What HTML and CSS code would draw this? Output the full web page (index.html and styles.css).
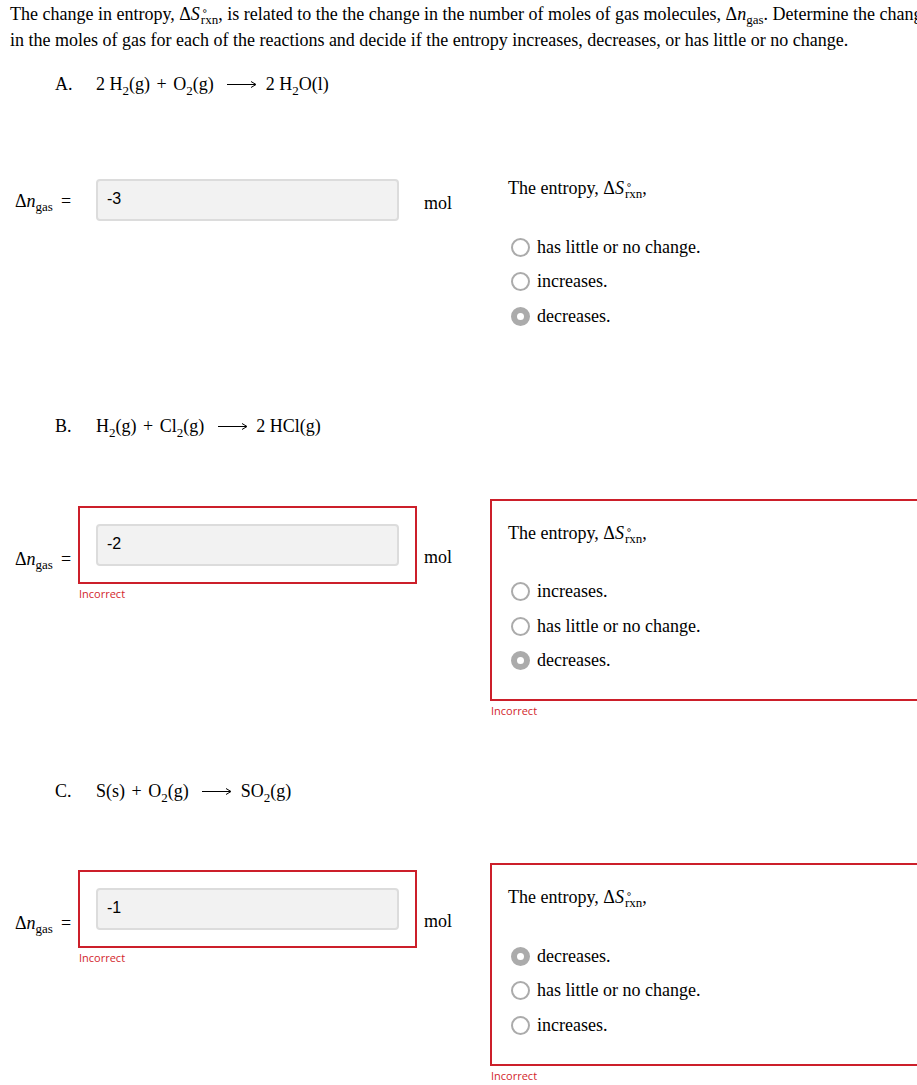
FILE: index.html
```html
<!DOCTYPE html>
<html lang="en">
<head>
<meta charset="utf-8">
<title>Entropy and moles of gas</title>
<link rel="stylesheet" href="styles.css">
</head>
<body>
<div class="page">
  <p class="intro">The change in entropy, <span class="m">Δ<i>S</i><span class="ss"><span class="sup">∘</span><span class="sub">rxn</span></span></span>, is related to the the change in the number of moles of gas molecules, <span class="m">Δ<i>n</i><span class="lsub">gas</span></span>. Determine the change in the moles of gas for each of the reactions and decide if the entropy increases, decreases, or has little or no change.</p>

  <section class="part">
    <div class="eq"><span class="letter">A.</span><span class="chem">2 H<span class="cs">2</span>(g) <span class="op">+</span> O<span class="cs">2</span>(g) <svg class="arrow" width="30" height="10" viewBox="0 0 30 10"><path d="M0 5.5H28" stroke="#000" stroke-width="1"/><path d="M24 2.5L29 5.5L24 8.5" fill="none" stroke="#000" stroke-width="1"/></svg> 2 H<span class="cs">2</span>O(l)</span></div>
    <div class="row">
      <div class="left">
        <span class="lbl">Δ<i>n</i><span class="lsub">gas</span><span class="eqs">=</span></span>
        <div class="field">
          <div class="box"><div class="input">-3</div></div>
        </div>
        <span class="unit">mol</span>
      </div>
      <div class="right">
        <div class="choice">
          <div class="title">The entropy, <span class="m">Δ<i>S</i><span class="ss"><span class="sup">∘</span><span class="sub">rxn</span></span></span>,</div>
          <ul class="opts">
            <li><span class="radio"></span>has little or no change.</li>
            <li><span class="radio"></span>increases.</li>
            <li><span class="radio on"></span>decreases.</li>
          </ul>
        </div>
      </div>
    </div>
  </section>

  <section class="part err">
    <div class="eq"><span class="letter">B.</span><span class="chem">H<span class="cs">2</span>(g) <span class="op">+</span> Cl<span class="cs">2</span>(g) <svg class="arrow" width="30" height="10" viewBox="0 0 30 10"><path d="M0 5.5H28" stroke="#000" stroke-width="1"/><path d="M24 2.5L29 5.5L24 8.5" fill="none" stroke="#000" stroke-width="1"/></svg> 2 HCl(g)</span></div>
    <div class="row">
      <div class="left">
        <span class="lbl">Δ<i>n</i><span class="lsub">gas</span><span class="eqs">=</span></span>
        <div class="field">
          <div class="box"><div class="input">-2</div></div>
          <div class="bad">Incorrect</div>
        </div>
        <span class="unit">mol</span>
      </div>
      <div class="right">
        <div class="choice">
          <div class="title">The entropy, <span class="m">Δ<i>S</i><span class="ss"><span class="sup">∘</span><span class="sub">rxn</span></span></span>,</div>
          <ul class="opts">
            <li><span class="radio"></span>increases.</li>
            <li><span class="radio"></span>has little or no change.</li>
            <li><span class="radio on"></span>decreases.</li>
          </ul>
        </div>
        <div class="bad">Incorrect</div>
      </div>
    </div>
  </section>

  <section class="part err">
    <div class="eq"><span class="letter">C.</span><span class="chem">S(s) <span class="op">+</span> O<span class="cs">2</span>(g) <svg class="arrow" width="30" height="10" viewBox="0 0 30 10"><path d="M0 5.5H28" stroke="#000" stroke-width="1"/><path d="M24 2.5L29 5.5L24 8.5" fill="none" stroke="#000" stroke-width="1"/></svg> SO<span class="cs">2</span>(g)</span></div>
    <div class="row">
      <div class="left">
        <span class="lbl">Δ<i>n</i><span class="lsub">gas</span><span class="eqs">=</span></span>
        <div class="field">
          <div class="box"><div class="input">-1</div></div>
          <div class="bad">Incorrect</div>
        </div>
        <span class="unit">mol</span>
      </div>
      <div class="right">
        <div class="choice">
          <div class="title">The entropy, <span class="m">Δ<i>S</i><span class="ss"><span class="sup">∘</span><span class="sub">rxn</span></span></span>,</div>
          <ul class="opts">
            <li><span class="radio on"></span>decreases.</li>
            <li><span class="radio"></span>has little or no change.</li>
            <li><span class="radio"></span>increases.</li>
          </ul>
        </div>
        <div class="bad">Incorrect</div>
      </div>
    </div>
  </section>
</div>
</body>
</html>
```

FILE: styles.css
```css
html {
  overflow-x: hidden;
}
body {
  margin: 0;
  background: #fff;
  color: #000;
  font-family: "Liberation Serif", "Times New Roman", serif;
  font-size: 18px;
}
.page {
  width: 925px;
  padding: 1px 0 0 10px;
}
.intro {
  margin: 0;
  line-height: 26px;
}
.m {
  white-space: nowrap;
}
.m i {
  font-style: italic;
}
.ss {
  display: inline-block;
  vertical-align: -4px;
  margin-left: 1px;
}
.ss .sup {
  display: block;
  font-family: "DejaVu Sans", sans-serif;
  font-size: 10px;
  line-height: 8px;
  padding-left: 1px;
}
.ss .sub {
  display: block;
  font-size: 13px;
  line-height: 10px;
}
.lsub {
  font-size: 13px;
  position: relative;
  top: 4px;
  line-height: 0;
}
.part {
  margin-top: 57px;
}
.part:first-of-type {
  margin-top: 18px;
}
.eq {
  display: flex;
  align-items: center;
  height: 26px;
  padding-left: 45px;
}
.letter {
  width: 41px;
}
.chem {
  white-space: nowrap;
}
.op {
  margin: 0 2px;
}
.cs {
  font-size: 13px;
  position: relative;
  top: 5px;
  line-height: 0;
}
.arrow {
  vertical-align: 1px;
  margin: 0 4px 0 9px;
}
.row {
  display: flex;
  margin-top: 57px;
}
.err .row {
  margin-top: 59px;
}
.left {
  display: flex;
  align-items: flex-start;
  width: 480px;
  padding-top: 7px;
}
.lbl {
  width: 63px;
  padding-left: 5px;
  margin-top: 30px;
  line-height: 20px;
  white-space: nowrap;
}
.eqs {
  margin-left: 8px;
}
.err .lbl {
  margin-top: 43px;
}
.field {
  width: 339px;
}
.box {
  border: 2px solid transparent;
  padding: 16px;
}
.err .box {
  border-color: #cc1f2a;
}
.input {
  height: 38px;
  border: 2px solid #dcdcdc;
  border-radius: 4px;
  background: #f2f2f2;
  font-family: "Liberation Sans", Arial, sans-serif;
  font-size: 16px;
  line-height: 36px;
  padding: 0 9px;
}
.bad {
  font-family: "Open Sans", "Noto Sans", sans-serif;
  font-size: 11px;
  line-height: 20px;
  color: #d21f2d;
  padding-left: 1px;
}
.unit {
  margin-left: 7px;
  margin-top: 32px;
  line-height: 20px;
}
.err .unit {
  margin-top: 41px;
}
.right {
  width: 440px;
}
.choice {
  border: 2px solid transparent;
  padding: 22px 16px 21px;
}
.err .choice {
  border-color: #cc1f2a;
}
.title {
  line-height: 20px;
}
.opts {
  list-style: none;
  margin: 31px 0 0;
  padding: 0;
}
.opts li {
  display: flex;
  align-items: center;
  height: 34.5px;
}
.radio {
  box-sizing: border-box;
  width: 19px;
  height: 19px;
  border: 2px solid #ababab;
  border-radius: 50%;
  margin: 0 7px 0 3px;
  flex: none;
  background: #fff;
}
.radio.on {
  border: 6px solid #ababab;
  background: #fff;
}
```
